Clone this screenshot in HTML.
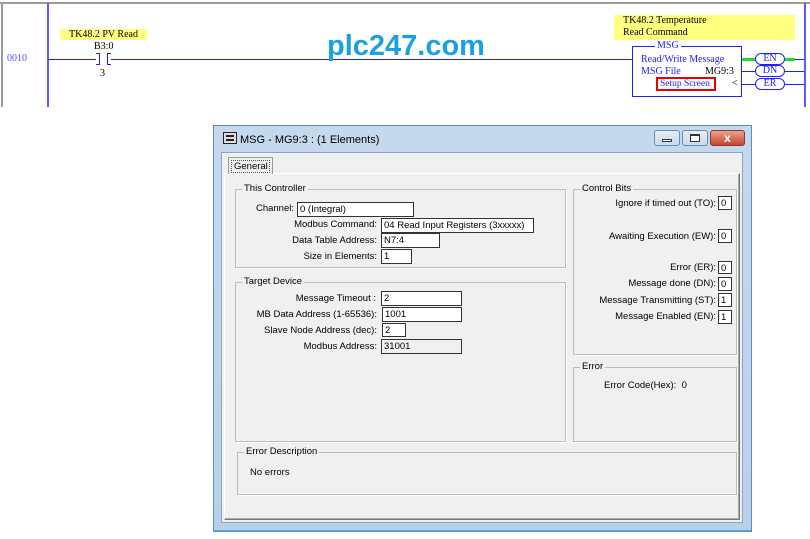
<!DOCTYPE html>
<html><head><style>
*{margin:0;padding:0;box-sizing:border-box}
body{width:810px;height:539px;background:#fff;position:relative;overflow:hidden;font-family:"Liberation Sans",sans-serif;font-size:11px;color:#000}
.a{position:absolute}
.s{font-family:"Liberation Serif",serif;font-size:10px;white-space:nowrap}
.t{position:absolute;white-space:nowrap;font-size:9.5px;line-height:12px}
.r{text-align:right}
.in{position:absolute;background:#fff;border:1px solid #333;font-size:9.5px;line-height:13px;padding-left:2px;white-space:nowrap;overflow:hidden}
.g{position:absolute;border:1px solid #bdbdbd;box-shadow:1px 1px 0 #fff}
.lg{position:absolute;top:-7px;left:6px;background:#f0f0f0;padding:0 2px;font-size:9.5px;line-height:12px;white-space:nowrap}
</style></head><body>
<!-- ladder -->
<div class="a" style="left:0;top:2px;width:810px;height:2px;background:#9a9a9a"></div>
<div class="a" style="left:1px;top:2px;width:2px;height:105px;background:#9a9a9a"></div>
<div class="a" style="left:47px;top:3px;width:2px;height:104px;background:#5a5aff"></div>
<div class="a" style="left:804px;top:3px;width:2px;height:104px;background:#5a5aff"></div>
<div class="a" style="left:48px;top:59px;width:584px;height:1px;background:#2020ff"></div>
<div class="a" style="left:741px;top:59px;width:63px;height:1px;background:#2020ff"></div>
<div class="a s" style="left:7px;top:53px;color:#5050ff">0010</div>
<div class="a s" style="left:60px;top:29px;width:87px;height:11px;background:#ffff80;padding-left:9px;line-height:11px">TK48.2 PV Read</div>
<div class="a s" style="left:94px;top:41px">B3:0</div>
<div class="a" style="left:96px;top:53px;width:4px;height:12px;border:1px solid #2020ff;border-left:none;background:#fff"></div>
<div class="a" style="left:107px;top:53px;width:4px;height:12px;border:1px solid #2020ff;border-right:none;background:#fff"></div>
<div class="a" style="left:100px;top:53px;width:7px;height:12px;background:#fff"></div>
<div class="a s" style="left:100px;top:68px">3</div>
<div class="a" style="left:327px;top:28px;font-size:29px;font-weight:bold;color:#1ba1e2;line-height:36px">plc247.com</div>
<div class="a s" style="left:614px;top:15px;width:181px;height:25px;background:#ffff80;padding-left:9px;line-height:12px">TK48.2 Temperature<br>Read Command</div>
<div class="a" style="left:632px;top:46px;width:110px;height:51px;border:1px solid #2020ff;background:#fff"></div>
<div class="a s" style="left:655px;top:40px;background:#fff;color:#2020ff;padding:0 2px">MSG</div>
<div class="a s" style="left:641px;top:54px;color:#2020ff">Read/Write Message</div>
<div class="a s" style="left:641px;top:66px;color:#2020ff">MSG File</div>
<div class="a s" style="left:705px;top:66px;color:#000">MG9:3</div>
<div class="a s" style="left:656px;top:77px;width:60px;height:14px;border:2px solid #e00;color:#2020ff;padding-left:2px;line-height:10px;font-size:9.5px">Setup Screen</div>
<div class="a s" style="left:732px;top:78px">&lt;</div>
<div class="a" style="left:742px;top:58px;width:15px;height:3px;background:#22dd22"></div>
<div class="a" style="left:783px;top:58px;width:12px;height:3px;background:#22dd22"></div>
<div class="a" style="left:742px;top:71px;width:62px;height:1px;background:#2020ff"></div>
<div class="a" style="left:742px;top:84px;width:62px;height:1px;background:#2020ff"></div>
<div class="a s" style="left:755px;top:53px;width:30px;height:12px;border:1px solid #2020ff;border-radius:6px/6px;background:#fff;color:#2020ff;text-align:center;line-height:10px">EN</div>
<div class="a s" style="left:755px;top:65px;width:30px;height:12px;border:1px solid #2020ff;border-radius:6px/6px;background:#fff;color:#2020ff;text-align:center;line-height:10px">DN</div>
<div class="a s" style="left:755px;top:78px;width:30px;height:12px;border:1px solid #2020ff;border-radius:6px/6px;background:#fff;color:#2020ff;text-align:center;line-height:10px">ER</div>

<!-- dialog -->
<div class="a" style="left:213px;top:125px;width:539px;height:407px;background:linear-gradient(#c4d9ee,#b8d0ea);border:1px solid #5a8fc0;box-shadow:inset 0 -1px 0 #5ad"></div>
<div class="a" style="left:221px;top:152px;width:522px;height:371px;background:#f0f0f0;border:1px solid #8aa6c4"></div>
<div class="a" style="left:223px;top:132px;width:14px;height:12px;border:1px solid #222;background:#ddd"><div style="margin:2px 2px;height:6px;border-top:2px solid #222;border-bottom:2px solid #222"></div></div>
<div class="a" style="left:240px;top:133px;font-size:11px;line-height:14px">MSG - MG9:3 : (1 Elements)</div>
<div class="a" style="left:654px;top:130px;width:26px;height:16px;border:1px solid #6d8bb0;border-radius:3px;background:linear-gradient(#e6eef8,#c9d8ea)"><div style="margin:8px auto 0;width:10px;height:3px;border:1px solid #333;background:#fff"></div></div>
<div class="a" style="left:682px;top:130px;width:26px;height:16px;border:1px solid #6d8bb0;border-radius:3px;background:linear-gradient(#e6eef8,#c9d8ea)"><div style="margin:3px auto 0;width:10px;height:8px;border:1px solid #333;border-top-width:2px;background:#fff"></div></div>
<div class="a" style="left:710px;top:130px;width:35px;height:16px;border:1px solid #8a3a2a;border-radius:3px;background:linear-gradient(#e9a48c,#c8452a);color:#fff;font-weight:bold;text-align:center;font-size:12px;line-height:14px">x</div>
<div class="a" style="left:224px;top:173px;width:516px;height:347px;border:1px solid #fff;border-right-color:#777;border-bottom-color:#777;box-shadow:inset -1px -1px 0 #aaa"></div>
<div class="a" style="left:228px;top:157px;width:45px;height:17px;border:1px solid #999;border-bottom:none;background:#f0f0f0;padding:2px 2px"><div style="border:1px dotted #555;font-size:9.5px;line-height:11px;padding:0 2px">General</div></div>

<div class="g" style="left:235px;top:189px;width:331px;height:79px"><span class="lg">This Controller</span></div>
<div class="t r" style="left:200px;top:203px;width:94px">Channel:</div>
<div class="in" style="left:297px;top:202px;width:117px;height:15px">0 (Integral)</div>
<div class="t r" style="left:230px;top:219px;width:147px">Modbus Command:</div>
<div class="in" style="left:381px;top:218px;width:153px;height:15px">04 Read Input Registers (3xxxxx)</div>
<div class="t r" style="left:230px;top:235px;width:147px">Data Table Address:</div>
<div class="in" style="left:381px;top:233px;width:59px;height:15px">N7:4</div>
<div class="t r" style="left:230px;top:251px;width:147px">Size in Elements:</div>
<div class="in" style="left:381px;top:249px;width:31px;height:15px">1</div>

<div class="g" style="left:235px;top:282px;width:331px;height:160px"><span class="lg">Target Device</span></div>
<div class="t r" style="left:230px;top:293px;width:146px">Message Timeout :</div>
<div class="in" style="left:381px;top:291px;width:81px;height:15px">2</div>
<div class="t r" style="left:230px;top:309px;width:147px">MB Data Address (1-65536):</div>
<div class="in" style="left:382px;top:307px;width:80px;height:15px">1001</div>
<div class="t r" style="left:230px;top:325px;width:147px">Slave Node Address (dec):</div>
<div class="in" style="left:382px;top:323px;width:24px;height:14px">2</div>
<div class="t r" style="left:230px;top:341px;width:147px">Modbus Address:</div>
<div class="in" style="left:381px;top:339px;width:81px;height:15px;background:#f0f0f0">31001</div>

<div class="g" style="left:573px;top:189px;width:164px;height:166px"><span class="lg">Control Bits</span></div>
<div class="t r" style="left:580px;top:198px;width:136px">Ignore if timed out (TO):</div>
<div class="in" style="left:718px;top:196px;width:14px;height:14px">0</div>
<div class="t r" style="left:580px;top:231px;width:136px">Awaiting Execution (EW):</div>
<div class="in" style="left:718px;top:229px;width:14px;height:14px">0</div>
<div class="t r" style="left:580px;top:262px;width:136px">Error (ER):</div>
<div class="in" style="left:718px;top:261px;width:14px;height:13px">0</div>
<div class="t r" style="left:580px;top:278px;width:136px">Message done (DN):</div>
<div class="in" style="left:718px;top:277px;width:14px;height:14px">0</div>
<div class="t r" style="left:580px;top:295px;width:136px">Message Transmitting (ST):</div>
<div class="in" style="left:718px;top:293px;width:14px;height:14px">1</div>
<div class="t r" style="left:580px;top:311px;width:136px">Message Enabled (EN):</div>
<div class="in" style="left:718px;top:310px;width:14px;height:14px">1</div>

<div class="g" style="left:573px;top:367px;width:164px;height:75px"><span class="lg">Error</span></div>
<div class="t" style="left:604px;top:380px">Error Code(Hex):&nbsp; 0</div>

<div class="g" style="left:237px;top:452px;width:500px;height:43px"><span class="lg">Error Description</span></div>
<div class="t" style="left:250px;top:467px">No errors</div>
</body></html>
